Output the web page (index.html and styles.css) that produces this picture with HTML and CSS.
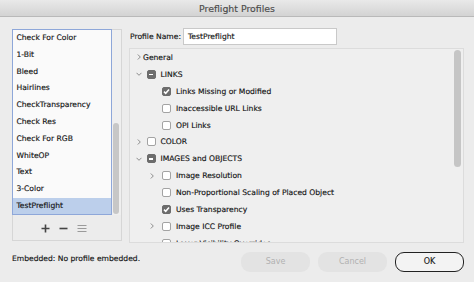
FILE: index.html
```html
<!DOCTYPE html>
<html>
<head>
<meta charset="utf-8">
<link rel="stylesheet" href="styles.css">
</head>
<body>
<div class="dialog">
  <div class="titlebar">Preflight Profiles</div>
  <div class="main">
    <div class="left">
      <div class="listarea">
        <ul class="list">
          <li>Check For Color</li>
          <li>1-Bit</li>
          <li>Bleed</li>
          <li>Hairlines</li>
          <li>CheckTransparency</li>
          <li>Check Res</li>
          <li>Check For RGB</li>
          <li>WhiteOP</li>
          <li>Text</li>
          <li>3-Color</li>
          <li class="sel">TestPreflight</li>
        </ul>
        <div class="track"><div class="thumb"></div></div>
      </div>
      <div class="tools">
        <svg class="tool" width="9" height="9" viewBox="0 0 9 9"><path d="M4.5 0.5V8.5M0.5 4.5H8.5" stroke="#444" stroke-width="1.6"/></svg>
        <svg class="tool" width="9" height="9" viewBox="0 0 9 9"><path d="M0.5 4.5H8.5" stroke="#444" stroke-width="1.6"/></svg>
        <svg class="tool" width="10" height="9" viewBox="0 0 10 9"><path d="M0.5 1.5H9.5M0.5 4.5H9.5M0.5 7.5H9.5" stroke="#9a9a9a" stroke-width="1"/></svg>
      </div>
    </div>
    <div class="right">
      <div class="namerow">
        <span class="namelabel">Profile Name:</span>
        <div class="input">TestPreflight</div>
      </div>
      <div class="tree">
        <div class="row l0 nocb"><svg class="chev" viewBox="0 0 6 6"><path d="M1.8 0.5L4.3 3L1.8 5.5"/></svg><span class="label">General</span></div>
        <div class="row l0"><svg class="chev" viewBox="0 0 6 6"><path d="M0.5 1.8L3 4.3L5.5 1.8"/></svg><span class="cb mixed"></span><span class="label">LINKS</span></div>
        <div class="row l1"><span class="chev"></span><span class="cb checked"><svg viewBox="0 0 9 9"><path d="M2 4.6L3.7 6.3L7 2.4"/></svg></span><span class="label">Links Missing or Modified</span></div>
        <div class="row l1"><span class="chev"></span><span class="cb"></span><span class="label">Inaccessible URL Links</span></div>
        <div class="row l1"><span class="chev"></span><span class="cb"></span><span class="label">OPI Links</span></div>
        <div class="row l0"><svg class="chev" viewBox="0 0 6 6"><path d="M1.8 0.5L4.3 3L1.8 5.5"/></svg><span class="cb"></span><span class="label">COLOR</span></div>
        <div class="row l0"><svg class="chev" viewBox="0 0 6 6"><path d="M0.5 1.8L3 4.3L5.5 1.8"/></svg><span class="cb mixed"></span><span class="label">IMAGES and OBJECTS</span></div>
        <div class="row l1"><svg class="chev" viewBox="0 0 6 6"><path d="M1.8 0.5L4.3 3L1.8 5.5"/></svg><span class="cb"></span><span class="label">Image Resolution</span></div>
        <div class="row l1"><span class="chev"></span><span class="cb"></span><span class="label">Non-Proportional Scaling of Placed Object</span></div>
        <div class="row l1"><span class="chev"></span><span class="cb checked"><svg viewBox="0 0 9 9"><path d="M2 4.6L3.7 6.3L7 2.4"/></svg></span><span class="label">Uses Transparency</span></div>
        <div class="row l1"><svg class="chev" viewBox="0 0 6 6"><path d="M1.8 0.5L4.3 3L1.8 5.5"/></svg><span class="cb"></span><span class="label">Image ICC Profile</span></div>
        <div class="row l1"><span class="chev"></span><span class="cb"></span><span class="label">Layer Visibility Overrides</span></div>
        <div class="treethumb"></div>
      </div>
    </div>
  </div>
  <div class="footer">
    <span class="status">Embedded: No profile embedded.</span>
    <div class="buttons">
      <div class="btn disabled">Save</div>
      <div class="btn disabled">Cancel</div>
      <div class="btn default">OK</div>
    </div>
  </div>
</div>
</body>
</html>
```

FILE: styles.css
```css
* { box-sizing: border-box; }
html, body { margin: 0; padding: 0; }
body {
  width: 474px;
  height: 282px;
  overflow: hidden;
  background: #ececec;
  font-family: "DejaVu Sans", "Liberation Sans", sans-serif;
  font-size: 7.6px;
  color: #141414;
  -webkit-text-stroke: 0.15px #141414;
}
.dialog { width: 474px; height: 282px; }

.titlebar {
  height: 17px;
  background: linear-gradient(#e9e9e9, #d3d3d3);
  border-bottom: 1px solid #b9b9b9;
  text-align: center;
  font-size: 9.4px;
  line-height: 17px;
  color: #4b4b4b;
  -webkit-text-stroke: 0.15px #4b4b4b;
}

.main {
  display: flex;
  padding: 11px 10px 0 12px;
}

.left {
  width: 110px;
  height: 212px;
  margin-top: 1px;
  border: 1px solid #d6d6d6;
  display: flex;
  flex-direction: column;
  flex: none;
}
.listarea { display: flex; height: 185px; }
.list {
  list-style: none;
  margin: -1px 0 0 -1px;
  padding: 0 0 0 4px;
  width: 100px;
  height: 186px;
  border: 1px solid #8ea7d9;
  background: #fafafa;
  overflow: hidden;
}
.list li {
  height: 16.8px;
  line-height: 16.8px;
  margin-left: -4px;
  padding-left: 3.5px;
  white-space: nowrap;
}
.list li.sel { background: #bccfeb; }
.track {
  width: 9px;
  display: flex;
  flex-direction: column;
  padding: 0 2px 1px 1px;
  background: #efefef;
}
.thumb {
  margin-top: auto;
  height: 91px;
  border-radius: 3px;
  background: #c7c7c7;
}
.tools {
  flex: 1;
  display: flex;
  align-items: center;
  justify-content: center;
  gap: 9px;
  padding-right: 6px;
  padding-top: 1px;
}
.tool { display: block; }

.right {
  margin-left: 7px;
  display: flex;
  flex-direction: column;
  flex: 1;
}
.namerow {
  display: flex;
  align-items: center;
  height: 17px;
}
.namelabel { width: 54px; padding-left: 1px; white-space: nowrap; }
.input {
  width: 154px;
  height: 17px;
  line-height: 15px;
  border: 1px solid #c9c9c9;
  background: #ffffff;
  padding-left: 4px;
}
.tree {
  position: relative;
  margin-top: 3px;
  width: 335px;
  height: 195px;
  border: 1px solid #dcdcdc;
  background: #efefef;
  overflow: hidden;
}
.row {
  display: flex;
  align-items: center;
  height: 16.9px;
  white-space: nowrap;
}
.l0 { padding-left: 5.5px; }
.l1 { padding-left: 18.5px; }
.chev {
  display: block;
  width: 6px;
  height: 6px;
  flex: none;
  margin-right: 5px;
  fill: none;
  stroke: #8c8c8c;
  stroke-width: 1;
}
.l1 .chev { margin-right: 7.5px; }
.nocb .chev { margin-right: 1.5px; }
.cb {
  width: 9px;
  height: 9px;
  flex: none;
  border: 1px solid #a3a3a3;
  border-radius: 2px;
  background: #ffffff;
  position: relative;
}
.cb.checked, .cb.mixed {
  background: #6c6c6c;
  border-color: #6c6c6c;
}
.cb svg {
  position: absolute;
  left: -1px;
  top: -1px;
  width: 9px;
  height: 9px;
  fill: none;
  stroke: #ffffff;
  stroke-width: 1.5;
}
.cb.mixed::after {
  content: "";
  position: absolute;
  left: 1.5px;
  top: 2.75px;
  width: 4px;
  height: 1.5px;
  background: #ffffff;
}
.label { margin-left: 5px; }
.nocb .label { margin-left: 0; }
.treethumb {
  position: absolute;
  right: 2px;
  top: 1px;
  width: 7px;
  height: 117px;
  border-radius: 3.5px;
  background: #c5c5c5;
}

.footer {
  display: flex;
  align-items: flex-start;
  justify-content: space-between;
  margin-top: 9px;
  padding: 0 10px 0 12px;
}
.status { line-height: 14px; padding-top: 0; }
.buttons { display: flex; gap: 8px; }
.btn {
  width: 69px;
  height: 20px;
  border-radius: 9px;
  text-align: center;
  line-height: 20px;
  font-size: 8px;
}
.btn.disabled {
  background: #e3e3e3;
  color: #b1b1b1;
  -webkit-text-stroke: 0;
}
.btn.default {
  background: #f3f3f3;
  border: 1.5px solid #222222;
  line-height: 17px;
  color: #222222;
}
```
